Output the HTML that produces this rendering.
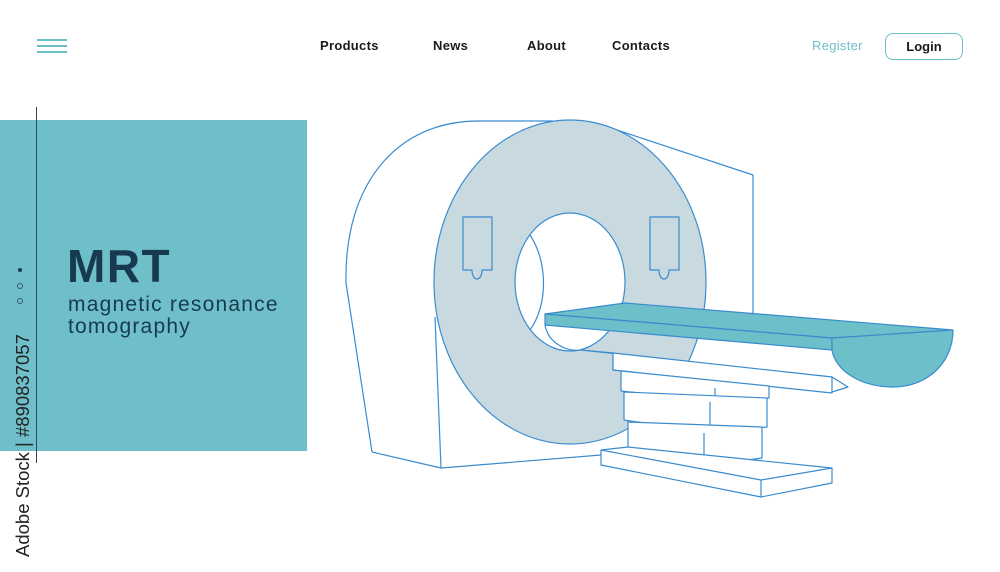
<!DOCTYPE html>
<html><head><meta charset="utf-8"><style>
body{margin:0;width:1000px;height:572px;background:#fff;position:relative;overflow:hidden;font-family:"Liberation Sans",sans-serif}
.a{position:absolute}
.nav{position:absolute;top:38px;font-size:13px;font-weight:bold;color:#1a1a1a;letter-spacing:.3px}
.hb{position:absolute;left:37px;width:30px;height:1.5px;background:#6dbfca}
</style></head><body>
<div class="hb" style="top:39px"></div><div class="hb" style="top:45px"></div><div class="hb" style="top:51px"></div>
<div class="nav" style="left:320px">Products</div>
<div class="nav" style="left:433px">News</div>
<div class="nav" style="left:527px">About</div>
<div class="nav" style="left:612px">Contacts</div>
<div class="nav" style="left:812px;color:#6dbfca;font-weight:normal">Register</div>
<div class="a" style="left:885px;top:33px;width:76px;height:25px;border:1.5px solid #6dbfca;border-radius:8px;font-size:13px;font-weight:bold;color:#1a1a1a;text-align:center;line-height:25px">Login</div>
<div class="a" style="left:0;top:120px;width:307px;height:331px;background:#6fbfcb"></div>
<div class="a" style="left:36px;top:107px;width:1px;height:356px;background:#2d4a5c"></div>
<div class="a" style="left:18px;top:268px;width:4px;height:4px;border-radius:50%;background:#1d3a4d"></div>
<div class="a" style="left:17px;top:283px;width:4px;height:4px;border-radius:50%;border:1px solid #3d5a6a"></div>
<div class="a" style="left:17px;top:298px;width:4px;height:4px;border-radius:50%;border:1px solid #3d5a6a"></div>
<div class="a" style="left:67px;top:239px;font-size:46px;font-weight:bold;color:#173a4f;letter-spacing:1.5px">MRT</div>
<div class="a" style="left:68px;top:294px;font-size:21px;line-height:22px;color:#173a4f;letter-spacing:1.2px">magnetic resonance<br>tomography</div>
<div class="a" style="left:12px;top:557px;transform:rotate(-90deg);transform-origin:0 0;font-size:18.5px;color:#222;white-space:nowrap">Adobe Stock | #890837057</div>
<svg class="a" style="left:0;top:0" width="1000" height="572" fill="none" stroke="#3a8ccf" stroke-width="1.2" stroke-linejoin="round">
<path d="M372,452 L346,283 C344,180 400,121 478,121 L553,121" fill="#fff"/>
<path d="M617,130 L753,175 L753,313" />
<path d="M372,452 L441,468 L601,455"/>
<path d="M435,317 L441,468"/>
<ellipse cx="570" cy="282" rx="136" ry="162" fill="#c8d9df"/>
<ellipse cx="570" cy="282" rx="55" ry="69" fill="#fff"/>
<path d="M530,235 C548,262 548,305 530,330"/>
<path d="M463,217 H492 V270 H482 C482,282 472,282 472,270 H463 Z"/>
<path d="M650,217 H679 V270 H669 C669,282 659,282 659,270 H650 Z"/>
<path d="M545,325 C548,342 565,352 581,350 L832,377 L848,387 L832,392 L613,370 L613,353 L581,350" fill="#fff"/>
<path d="M613,353 L832,377 L832,393 L613,370 Z" fill="#fff"/>
<path d="M621,371 L769,386 L769,398 L715,401 L621,391 Z" fill="#fff"/><path d="M715,388 V401"/>
<path d="M624,392 L767,398 L767,427 L710,433 L624,420 Z" fill="#fff"/><path d="M710,402 V433"/>
<path d="M628,422 L762,427 L762,458 L704,466 L628,450 Z" fill="#fff"/><path d="M704,433 V466"/>
<path d="M601,450 L628,447 L832,468 L832,483 L761,497 L601,465 Z" fill="#fff"/><path d="M601,450 L761,480 L832,468 M761,480 V497"/>
<path d="M545,314 L625,303 L953,330 L832,338 Z" fill="#6dbfca"/>
<path d="M545,314 L832,338 L832,350 L545,325 Z" fill="#6dbfca"/>
<path d="M832,338 L953,330 C953,365 925,387 893,387 C860,387 835,370 832,350 Z" fill="#6dbfca"/>
</svg>
</body></html>
